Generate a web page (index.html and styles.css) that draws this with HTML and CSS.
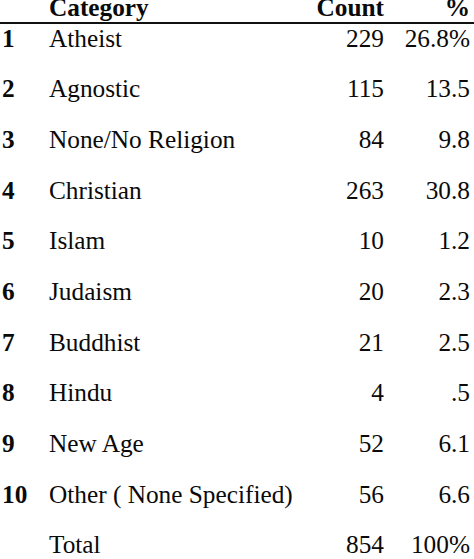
FILE: index.html
```html
<!DOCTYPE html>
<html>
<head>
<meta charset="utf-8">
<link rel="stylesheet" href="styles.css">
</head>
<body>
<div class="table">
  <div class="row head">
    <div class="c num"></div>
    <div class="c cat">Category</div>
    <div class="c cnt">Count</div>
    <div class="c pct">%</div>
  </div>
  <div class="row"><div class="c num">1</div><div class="c cat">Atheist</div><div class="c cnt">229</div><div class="c pct">26.8%</div></div>
  <div class="row"><div class="c num">2</div><div class="c cat">Agnostic</div><div class="c cnt">115</div><div class="c pct">13.5</div></div>
  <div class="row"><div class="c num">3</div><div class="c cat">None/No Religion</div><div class="c cnt">84</div><div class="c pct">9.8</div></div>
  <div class="row"><div class="c num">4</div><div class="c cat">Christian</div><div class="c cnt">263</div><div class="c pct">30.8</div></div>
  <div class="row"><div class="c num">5</div><div class="c cat">Islam</div><div class="c cnt">10</div><div class="c pct">1.2</div></div>
  <div class="row"><div class="c num">6</div><div class="c cat">Judaism</div><div class="c cnt">20</div><div class="c pct">2.3</div></div>
  <div class="row"><div class="c num">7</div><div class="c cat">Buddhist</div><div class="c cnt">21</div><div class="c pct">2.5</div></div>
  <div class="row"><div class="c num">8</div><div class="c cat">Hindu</div><div class="c cnt">4</div><div class="c pct">.5</div></div>
  <div class="row"><div class="c num">9</div><div class="c cat">New Age</div><div class="c cnt">52</div><div class="c pct">6.1</div></div>
  <div class="row"><div class="c num">10</div><div class="c cat">Other ( None Specified)</div><div class="c cnt">56</div><div class="c pct">6.6</div></div>
  <div class="row"><div class="c num"></div><div class="c cat">Total</div><div class="c cnt">854</div><div class="c pct">100%</div></div>
</div>
</body>
</html>
```
FILE: styles.css
```css
html, body {
  margin: 0;
  padding: 0;
  background: #fff;
}
body {
  width: 474px;
  height: 559px;
  overflow: hidden;
  font-family: "Liberation Serif", "Times New Roman", serif;
  font-size: 25.3px;
  color: #0a0a0a;
}
.table {
  display: flex;
  flex-direction: column;
}
.row {
  display: grid;
  grid-template-columns: 49px 245px 90px 86px;
  padding-right: 4px;
  line-height: 29px;
  height: 29px;
  padding-bottom: 21.7px;
  white-space: nowrap;
}
.row.head {
  font-weight: bold;
  line-height: 15px;
  height: 15px;
  padding-bottom: 7px;
  border-bottom: 2.5px solid #111;
}
.row.head + .row {
  margin-top: -0.5px;
}
.num {
  font-weight: bold;
  padding-left: 2px;
}
.cnt, .pct {
  text-align: right;
}
```
